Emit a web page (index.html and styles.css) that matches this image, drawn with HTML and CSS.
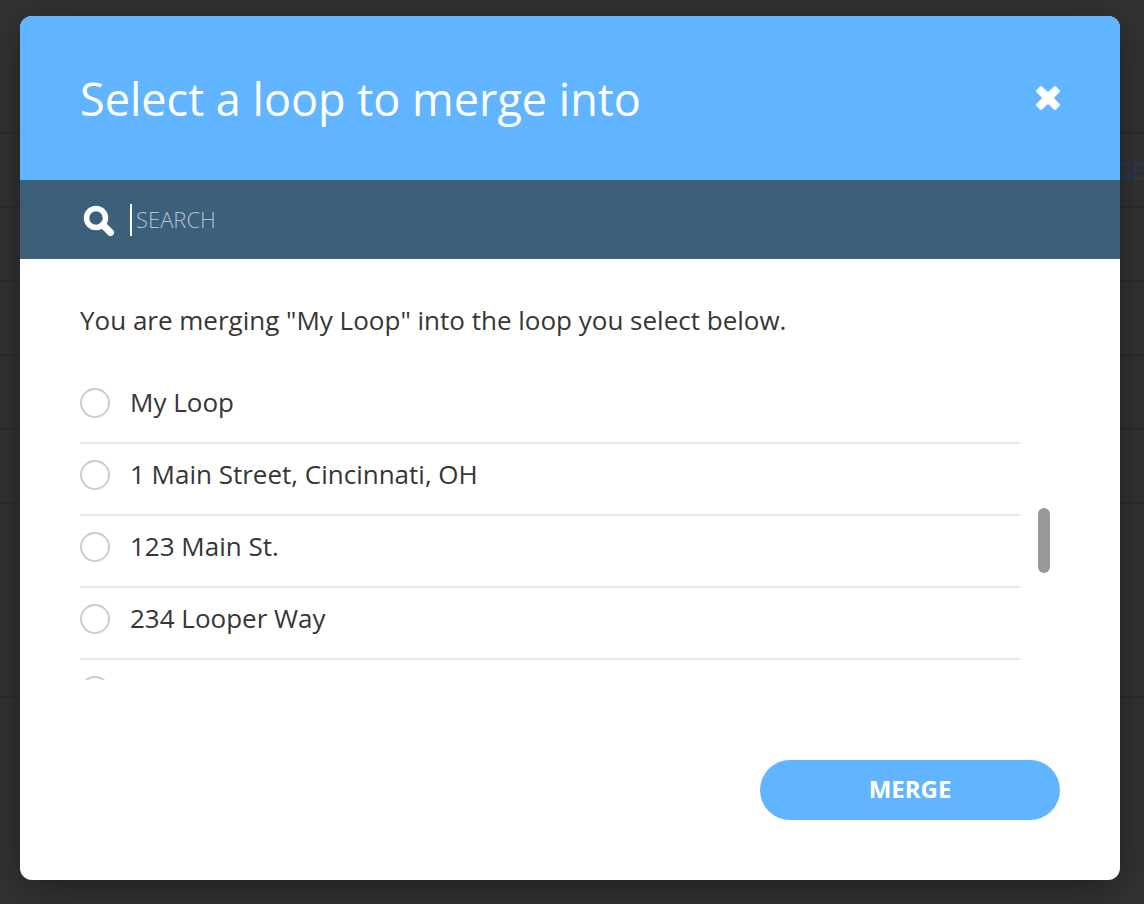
FILE: index.html
```html
<!DOCTYPE html>
<html lang="en">
<head>
    <meta charset="UTF-8">
    <meta name="viewport" content="width=device-width, initial-scale=1.0">
    <title>Select a loop to merge into</title>
    <link rel="stylesheet" href="styles.css">
</head>
<body>
    <!-- dimmed page behind the dialog -->
    <div class="page">
        <div class="page-top"></div>
        <div class="page-row page-head">GE</div>
        <div class="page-row"></div>
        <div class="page-row"></div>
        <div class="page-row"></div>
        <div class="page-row"></div>
        <div class="page-row page-tall"></div>
    </div>

    <div class="overlay">
        <div class="modal" role="dialog" aria-labelledby="modal-title">
            <header class="modal-header">
                <h1 id="modal-title">Select a loop to merge into</h1>
                <button type="button" class="close" aria-label="Close">
                    <svg width="24" height="24" viewBox="0 0 24 24">
                        <path d="M5 1L12 7.5L19 1L23 5L16.5 12L23 19L19 23L12 16.5L5 23L1 19L7.5 12L1 5Z" fill="#fff" stroke="#fff" stroke-width="2" stroke-linejoin="round"/>
                    </svg>
                </button>
            </header>

            <div class="search">
                <label for="search">
                    <svg width="32" height="32" viewBox="0 0 32 32" aria-label="Search">
                        <circle cx="14" cy="14" r="9.5" fill="none" stroke="#fff" stroke-width="5.5"/>
                        <path d="M21 21L28.5 28.5" stroke="#fff" stroke-width="7" stroke-linecap="round"/>
                    </svg>
                </label>
                <input type="text" id="search" name="search" placeholder="SEARCH">
            </div>

            <form class="modal-body">
                <p class="intro">You are merging "My Loop" into the loop you select below.</p>

                <div class="list-wrap">
                    <ul class="loops">
                        <li><label><input type="radio" name="loop" value="1"><span>My Loop</span></label></li>
                        <li><label><input type="radio" name="loop" value="2"><span>1 Main Street, Cincinnati, OH</span></label></li>
                        <li><label><input type="radio" name="loop" value="3"><span>123 Main St.</span></label></li>
                        <li><label><input type="radio" name="loop" value="4"><span>234 Looper Way</span></label></li>
                        <li><label><input type="radio" name="loop" value="5" aria-label="Loop 5"></label></li>
                    </ul>
                    <div class="scrollbar"><div class="thumb"></div></div>
                </div>

                <div class="actions">
                    <button type="button" class="merge">MERGE</button>
                </div>
            </form>
        </div>
    </div>
</body>
</html>
```
FILE: styles.css
```css
* {
    box-sizing: border-box;
}

body {
    margin: 0;
    min-height: 100vh;
    background-color: #333333;
    font-family: "Open Sans", "Noto Sans", sans-serif;
    color: #363636;
}

/* Page behind */
.page-top {
    height: 132px;
}

.page-row {
    height: 74px;
    border-top: 2px solid #2d2d2d;
}

.page-head {
    display: flex;
    align-items: center;
    justify-content: flex-end;
    font-size: 22px;
    color: #22405e;
}

.page-tall {
    height: 196px;
    border-bottom: 2px solid #2d2d2d;
}

/* Dialog */
.overlay {
    position: absolute;
    inset: 0;
    padding: 16px 24px 24px 20px;
}

.modal {
    min-height: 100%;
    border-radius: 12px;
    overflow: hidden;
    background-color: #ffffff;
    box-shadow: 0 8px 40px rgba(0, 0, 0, 0.4);
}

.modal-header {
    display: flex;
    align-items: center;
    justify-content: space-between;
    height: 164px;
    padding: 0 60px;
    background-color: #61b4ff;
}

.modal-header h1 {
    margin: 0;
    font-size: 45px;
    font-weight: 400;
    color: #ffffff;
}

.close {
    display: flex;
    padding: 0;
    border: 0;
    background: none;
    cursor: pointer;
}

.search {
    display: flex;
    align-items: center;
    gap: 16px;
    height: 79px;
    padding: 0 60px 0 62px;
    background-color: #3c607a;
}

.search label {
    display: flex;
}

/* left border is the text cursor */
.search input {
    flex: 1;
    height: 32px;
    padding: 0 0 2px 4px;
    border: 0;
    border-left: 2px solid #ffffff;
    outline: none;
    background: none;
    font-family: inherit;
    font-size: 22px;
    font-weight: 300;
    color: #ffffff;
}

.search input::placeholder {
    color: #b4c3ce;
}

.modal-body {
    padding: 41px 60px 60px;
}

.intro {
    margin: 0 0 32px;
    font-size: 26px;
    line-height: 40px;
}

.list-wrap {
    display: flex;
    justify-content: space-between;
    height: 308px;
    overflow: hidden;
}

.loops {
    flex: 1;
    margin: 0 18px 0 0;
    padding: 0;
    list-style: none;
}

.loops li {
    height: 72px;
    border-bottom: 2px solid #e6e6e6;
}

.loops label {
    display: flex;
    align-items: center;
    gap: 20px;
    height: 62px;
    font-size: 26px;
}

.loops span {
    padding-bottom: 2px;
}

.loops input {
    appearance: none;
    width: 30px;
    height: 30px;
    margin: 0;
    border: 2px solid #cccccc;
    border-radius: 50%;
    background-color: #ffffff;
}

.loops input:checked {
    background-color: #61b4ff;
}

.scrollbar {
    width: 12px;
    margin-right: 10px;
    padding-top: 136px;
}

.thumb {
    height: 65px;
    border-radius: 6px;
    background-color: #999999;
}

.actions {
    display: flex;
    justify-content: flex-end;
    margin-top: 80px;
}

.merge {
    width: 300px;
    height: 60px;
    padding: 0 0 3px;
    border: 0;
    border-radius: 30px;
    background-color: #61b4ff;
    font-family: inherit;
    font-size: 24px;
    font-weight: 700;
    color: #ffffff;
    cursor: pointer;
}
```
